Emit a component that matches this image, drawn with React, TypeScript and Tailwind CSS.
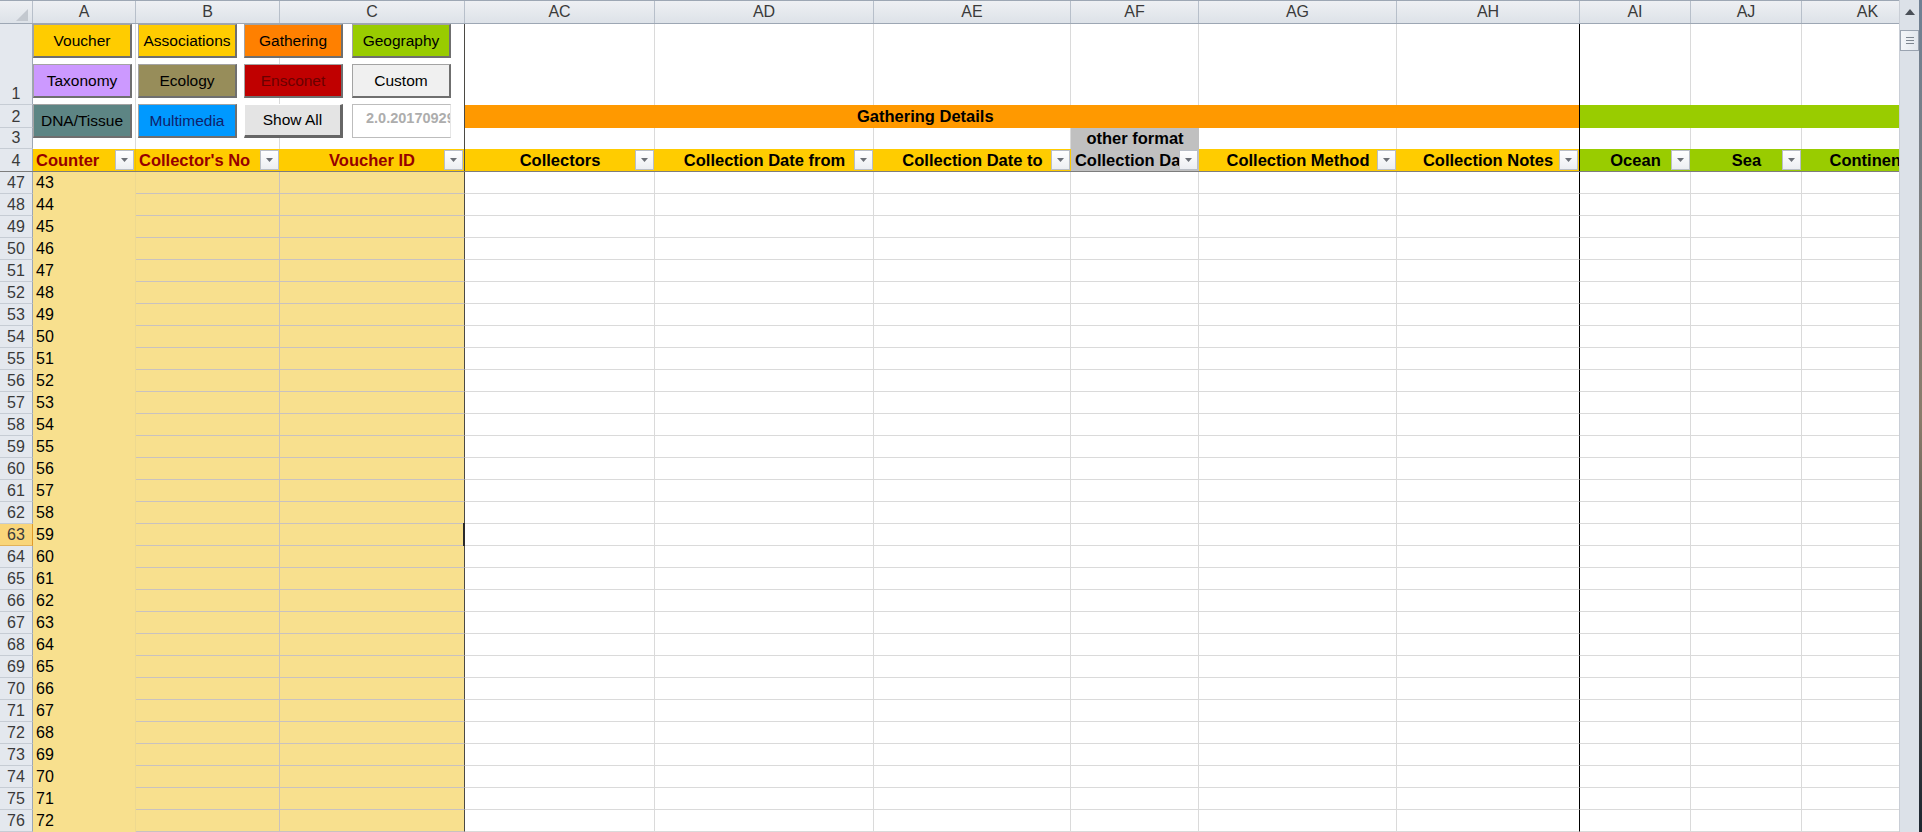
const font = "font-['Liberation_Sans',Arial,sans-serif]";

const cols = [
  { id: "A", w: "w-[103px]" },
  { id: "B", w: "w-[144px]" },
  { id: "C", w: "w-[185px]" },
  { id: "AC", w: "w-[190px]" },
  { id: "AD", w: "w-[219px]" },
  { id: "AE", w: "w-[197px]" },
  { id: "AF", w: "w-[128px]" },
  { id: "AG", w: "w-[198px]" },
  { id: "AH", w: "w-[183px]" },
  { id: "AI", w: "w-[111px]" },
  { id: "AJ", w: "w-[111px]" },
  { id: "AK", w: "w-[132px]" },
];

// right border colour of each column in the sheet body
const rightLine: Record<string, string> = {
  A: "border-r-[#eed98f]",
  B: "border-r-[#c9c2bf]",
  C: "border-r-[#4b4a45]",
  AH: "border-r-black",
};

const buttons = [
  { label: "Voucher", cls: "bg-[#ffcc00] text-black" },
  { label: "Associations", cls: "bg-[#ffcc00] text-black text-[14.5px]" },
  { label: "Gathering", cls: "bg-[#ff8000] text-black" },
  { label: "Geography", cls: "bg-[#99cc00] text-black" },
  { label: "Taxonomy", cls: "bg-[#cc99ff] text-black" },
  { label: "Ecology", cls: "bg-[#978d5a] text-black" },
  { label: "Ensconet", cls: "bg-[#c00000] text-[#6a0000]" },
  { label: "Custom", cls: "bg-[#f0f0f0] text-black" },
  { label: "DNA/Tissue", cls: "bg-[#5d8584] text-black" },
  { label: "Multimedia", cls: "bg-[#0099ff] text-[#10226a]" },
];

function FilterBtn() {
  return (
    <span className="absolute right-[1px] top-[1px] flex h-[20px] w-[19px] items-center justify-center border border-[#b9bec6] bg-gradient-to-b from-white to-[#eceef2]">
      <svg width="7" height="4" viewBox="0 0 7 4">
        <path d="M0 0h7L3.5 4z" fill="#6b6f76" />
      </svg>
    </span>
  );
}

function HeaderCell({
  w,
  text,
  bg,
  color = "text-black",
  align = "center",
  filter = true,
  extra = "",
}: {
  w: string;
  text: string;
  bg: string;
  color?: string;
  align?: "left" | "center";
  filter?: boolean;
  extra?: string;
}) {
  return (
    <div className={`relative h-full shrink-0 overflow-hidden ${w} ${bg} ${extra}`}>
      <div
        className={`flex h-full items-center whitespace-nowrap text-[16.5px] font-bold ${color} ${
          align === "left" ? "justify-start pl-[3px]" : "justify-center"
        }`}
      >
        {text}
      </div>
      {filter && <FilterBtn />}
    </div>
  );
}

export default function App() {
  const rows = Array.from({ length: 30 }, (_, i) => 47 + i);

  return (
    <div className={`flex h-[832px] w-[1922px] overflow-hidden bg-white ${font}`}>
      <div className="relative w-[1899px] shrink-0 overflow-hidden">
        {/* column letters */}
        <div className="flex h-[24px] border-y border-[#9da7b4] bg-gradient-to-b from-[#eef0f3] to-[#dde2e8] text-[16px] text-[#3a3a3a]">
          <div className="relative w-[33px] shrink-0 border-r border-[#b7bfca]">
            <svg className="absolute left-0 top-0" width="33" height="22">
              <path d="M28 8v12H16z" fill="#c3c8cf" />
            </svg>
          </div>
          {cols.map((c) => (
            <div
              key={c.id}
              className={`flex shrink-0 items-center justify-center border-r border-[#b7bfca] ${c.w}`}
            >
              {c.id}
            </div>
          ))}
        </div>

        {/* rows 1-3 */}
        {[
          { n: "1", h: "h-[81px]" },
          { n: "2", h: "h-[23px]" },
          { n: "3", h: "h-[21px]" },
        ].map((r) => (
          <div key={r.n} className={`flex ${r.h}`}>
            <div className="flex w-[33px] shrink-0 items-end justify-center border-b border-r border-[#c6ccd4] border-r-[#9da7b4] bg-[#e4e8ee] text-[16px] leading-[21px] text-[#3a3a3a]">
              {r.n}
            </div>
            {cols.slice(0, 3).map((c) => (
              <div
                key={c.id}
                className={`shrink-0 border-r ${c.w} ${c.id === "C" ? "border-r-[#4b4a45]" : "border-r-[#dadada]"}`}
              />
            ))}
            {r.n === "2" ? (
              <>
                <div className="flex w-[1115px] shrink-0 items-center border-r border-r-black bg-[#ff9900] pl-[392px] text-[16.5px] font-bold">
                  Gathering Details
                </div>
                <div className="w-[354px] shrink-0 bg-[#99cc00]" />
              </>
            ) : (
              cols.slice(3).map((c) =>
                r.n === "3" && c.id === "AF" ? (
                  <div
                    key={c.id}
                    className={`flex shrink-0 items-center justify-center bg-[#c0c0c0] text-[16.5px] font-bold ${c.w}`}
                  >
                    other format
                  </div>
                ) : (
                  <div
                    key={c.id}
                    className={`shrink-0 border-r ${c.w} ${rightLine[c.id] ?? "border-r-[#dadada]"}`}
                  />
                )
              )
            )}
          </div>
        ))}

        {/* row 4: table headers */}
        <div className="flex h-[23px] border-b border-[#7d7d7d]">
          <div className="flex w-[33px] shrink-0 items-end justify-center border-r border-[#9da7b4] bg-[#e4e8ee] text-[16px] leading-[21px] text-[#3a3a3a]">
            4
          </div>
          <HeaderCell w="w-[103px]" text="Counter" bg="bg-[#ffcc00]" color="text-[#960000]" align="left" extra="border-r border-r-[#f0c000]" />
          <HeaderCell w="w-[144px]" text="Collector's No" bg="bg-[#ffcc00]" color="text-[#960000]" align="left" />
          <HeaderCell w="w-[185px]" text="Voucher ID" bg="bg-[#ffcc00]" color="text-[#960000]" extra="border-r border-r-[#4b4a45]" />
          <HeaderCell w="w-[190px]" text="Collectors" bg="bg-[#ffcc00]" />
          <HeaderCell w="w-[219px]" text="Collection Date from" bg="bg-[#ffcc00]" />
          <HeaderCell w="w-[197px]" text="Collection Date to" bg="bg-[#ffcc00]" />
          <HeaderCell w="w-[128px]" text="Collection Date" bg="bg-[#c0c0c0]" />
          <HeaderCell w="w-[198px]" text="Collection Method" bg="bg-[#ffcc00]" />
          <HeaderCell w="w-[183px]" text="Collection Notes" bg="bg-[#ffcc00]" extra="border-r border-r-black" />
          <HeaderCell w="w-[111px]" text="Ocean" bg="bg-[#99cc00]" />
          <HeaderCell w="w-[111px]" text="Sea" bg="bg-[#99cc00]" />
          <HeaderCell w="w-[132px]" text="Continent" bg="bg-[#99cc00]" filter={false} />
        </div>

        {/* body rows */}
        {rows.map((n) => {
          const active = n === 63;
          return (
            <div key={n} className="flex h-[22px]">
              <div
                className={`flex w-[33px] shrink-0 items-center justify-center border-b border-r text-[16px] text-[#3a3a3a] ${
                  active
                    ? "border-[#e2b25a] border-r-[#e09a2a] bg-[#f9d57a]"
                    : "border-[#c6ccd4] border-r-[#9da7b4] bg-[#e4e8ee]"
                }`}
              >
                {n}
              </div>
              {cols.map((c) => {
                const yellow = c.id === "A" || c.id === "B" || c.id === "C";
                return (
                  <div
                    key={c.id}
                    className={`relative shrink-0 border-r ${c.w} ${rightLine[c.id] ?? "border-r-[#dadada]"} ${
                      yellow ? "bg-[#f8e08e]" : ""
                    } ${c.id === "A" ? "" : yellow ? "border-b border-b-[#c9c2bf]" : "border-b border-b-[#dadada]"} ${
                      c.id === "A" ? "flex items-center pl-[3px] text-[16px] text-black" : ""
                    }`}
                  >
                    {c.id === "A" ? n - 4 : null}
                    {active && c.id === "AC" && (
                      <span className="absolute left-[-2px] top-[-1px] h-[24px] w-[2px] bg-[#2a2a2a]" />
                    )}
                  </div>
                );
              })}
            </div>
          );
        })}

        {/* form buttons floating over A-C, rows 1-3 */}
        <div className="absolute left-[33px] top-[24px] grid grid-cols-[105px_106px_108px_99px] grid-rows-[40px_40px_34px]">
          {buttons.map((b) => (
            <div
              key={b.label}
              className={`flex h-[34px] w-[99px] items-center justify-center border border-[#a3a3a3] border-b-2 border-r-2 border-b-[#6f6f6f] border-r-[#6f6f6f] text-[15.5px] ${b.cls}`}
            >
              {b.label}
            </div>
          ))}
          <div className="flex h-[34px] w-[99px] items-center justify-center border border-white border-b-[3px] border-r-[3px] border-b-[#666] border-r-[#666] bg-[#e4e4e4] text-[15.5px] text-black">
            Show All
          </div>
          <div className="h-[34px] w-[99px] overflow-hidden whitespace-nowrap border border-[#bdbdbd] border-r-[#e6e6e6] bg-white pl-[13px] pt-[3px] text-[14.5px] font-bold text-[#adadad]">
            2.0.20170929
          </div>
        </div>
      </div>

      {/* vertical scrollbar */}
      <div className="flex w-[20px] shrink-0 flex-col items-center border-l border-[#c9ced6] bg-[#dce1e8]">
        <div className="flex h-[24px] items-center justify-center">
          <svg width="10" height="6" viewBox="0 0 10 6">
            <path d="M5 0l5 6H0z" fill="#4a4f57" />
          </svg>
        </div>
        <div className="mt-[6px] flex h-[21px] w-[19px] flex-col items-center justify-center gap-[2px] border border-[#9aa3b0] bg-gradient-to-r from-[#f4f6f9] to-[#e3e7ed]">
          <span className="h-px w-[8px] bg-[#7d858f]" />
          <span className="h-px w-[8px] bg-[#7d858f]" />
          <span className="h-px w-[8px] bg-[#7d858f]" />
        </div>
      </div>
      <div className="w-[3px] shrink-0 bg-gradient-to-b from-[#6f8094] via-[#8a7c6b] to-[#1d2630]" />
    </div>
  );
}
